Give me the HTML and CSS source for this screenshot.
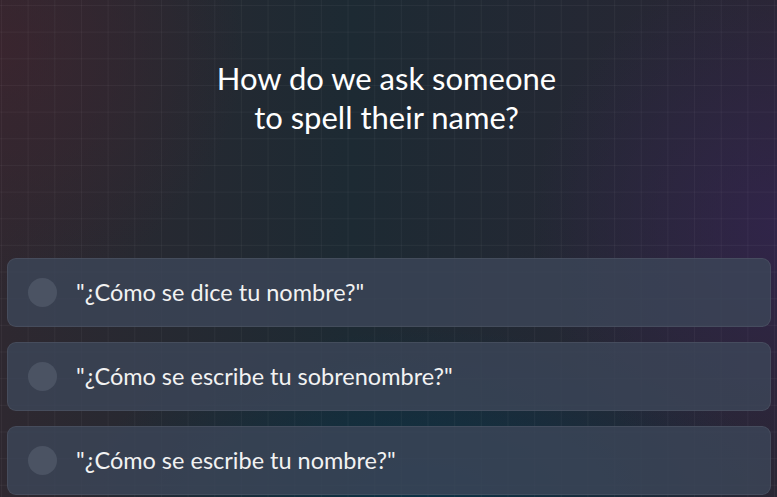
FILE: index.html
```html
<!DOCTYPE html>
<html lang="en">

<head>
    <meta charset="UTF-8">
    <meta name="viewport" content="width=device-width, initial-scale=1.0">
    <title>Quiz</title>
    <link rel="stylesheet" href="styles.css">
</head>

<body>
    <div class="quiz">
        <div class="question">
            <h1>How do we ask someone to spell their name?</h1>
        </div>

        <div class="answers">
            <div class="answer">
                <span class="dot"></span>
                <p>"¿Cómo se dice tu nombre?"</p>
            </div>
            <div class="answer">
                <span class="dot"></span>
                <p>"¿Cómo se escribe tu sobrenombre?"</p>
            </div>
            <div class="answer">
                <span class="dot"></span>
                <p>"¿Cómo se escribe tu nombre?"</p>
            </div>
        </div>
    </div>
</body>

</html>
```

FILE: styles.css
```css
* {
    box-sizing: border-box;
    margin: 0;
    padding: 0;
}

html,
body {
    height: 100%;
}

body {
    font-family: Lato, "Open Sans", sans-serif;
    color: #f4f4f4;
    background-color: #1c2830;
    background-image:
        linear-gradient(rgba(255, 255, 255, 0.04) 1px, transparent 1px),
        linear-gradient(90deg, rgba(255, 255, 255, 0.04) 1px, transparent 1px),
        radial-gradient(ellipse 45% 70% at 0% 10%, rgba(62, 36, 46, 0.7), transparent 70%),
        radial-gradient(ellipse 45% 75% at 100% 45%, rgba(50, 36, 78, 0.8), transparent 70%),
        radial-gradient(ellipse 60% 45% at 55% 100%, rgba(8, 52, 74, 0.8), transparent 75%),
        linear-gradient(90deg, #2e2830 0%, #1d2a33 45%, #2a2634 100%);
    background-size: 26.67px 26.67px, 26.67px 26.67px, 100% 100%, 100% 100%, 100% 100%, 100% 100%;
    background-position: 0 5px, 1px 0, 0 0, 0 0, 0 0, 0 0;
    overflow: hidden;
}

.quiz {
    display: flex;
    flex-direction: column;
    height: 100%;
}

.question {
    height: 258px;
    padding-top: 59px;
    padding-right: 4px;
    display: flex;
    justify-content: center;
}

.question h1 {
    width: 360px;
    text-align: center;
    font-size: 31px;
    font-weight: 400;
    line-height: 39px;
    color: #ffffff;
}

.answers {
    display: flex;
    flex-direction: column;
    gap: 15px;
    padding: 0 6px 0 7px;
}

.answer {
    height: 69px;
    display: flex;
    align-items: center;
    gap: 19px;
    padding-left: 20px;
    background-color: rgba(60, 70, 88, 0.82);
    border: 1px solid rgba(255, 255, 255, 0.07);
    border-radius: 9px;
}

.dot {
    width: 29px;
    height: 29px;
    border-radius: 50%;
    background-color: #4b5363;
    flex-shrink: 0;
}

.answer p {
    font-size: 23.5px;
    line-height: 1;
    color: #f2f2f2;
}
```
